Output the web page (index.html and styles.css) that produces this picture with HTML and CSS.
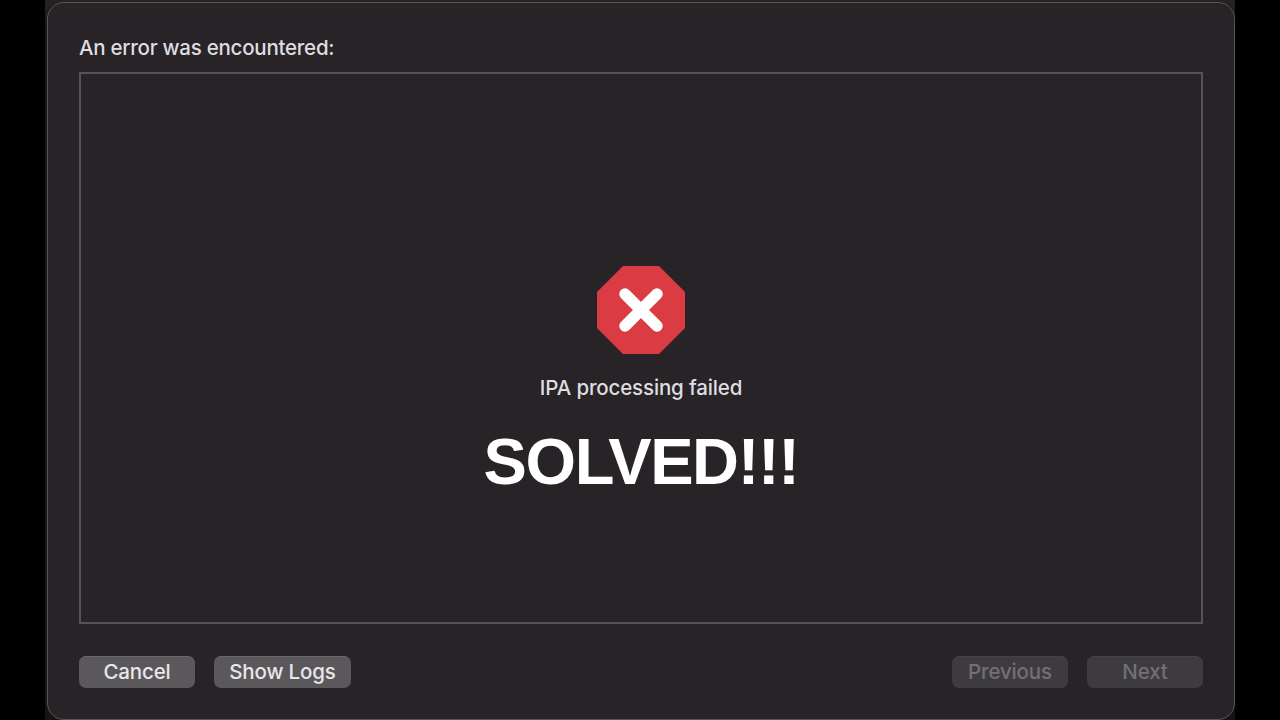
FILE: index.html
```html
<!DOCTYPE html>
<html lang="en">

<head>
    <meta charset="UTF-8">
    <meta name="viewport" content="width=device-width, initial-scale=1.0">
    <title>IPA processing failed</title>
    <link rel="stylesheet" href="styles.css">
</head>

<body>
    <div class="backdrop">
        <div class="dialog">
            <h1 class="heading">An error was encountered:</h1>

            <!-- Error message -->
            <div class="message-box">
                <svg class="error-icon" viewBox="0 0 88 88">
                    <path fill="#db3b42" d="M26 0H62L88 26V62L62 88H26L0 62V26Z" />
                    <path stroke="#fff" stroke-width="11.5" stroke-linecap="round" d="M28 28L60 60M60 28L28 60" />
                </svg>
                <p class="message">IPA processing failed</p>
                <p class="solved">SOLVED!!!</p>
            </div>

            <!-- Buttons -->
            <div class="buttons">
                <button class="cancel">Cancel</button>
                <button class="logs">Show Logs</button>
                <button class="previous" disabled>Previous</button>
                <button class="next" disabled>Next</button>
            </div>
        </div>
    </div>
</body>

</html>
```
FILE: styles.css
```css
* {
    margin: 0;
    padding: 0;
    box-sizing: border-box;
}

body {
    height: 720px;
    overflow: hidden;
    background-color: #000;
    font-family: Inter, "Liberation Sans", sans-serif;
    font-size: 20.5px;
    font-weight: 400;
    color: #dfdde0;
}

/* Strip of desktop behind the dialog */
.backdrop {
    width: 1190px;
    height: 720px;
    margin-left: 45px;
    padding: 2px 0 0 2px;
    background: linear-gradient(#252422, #151415 30px);
}

.dialog {
    display: flex;
    flex-direction: column;
    height: 718px;
    padding: 30px 31px 31px;
    border: 1px solid #57555a;
    border-radius: 17px;
    background-color: #272327;
}

.heading {
    height: 39px;
    padding-top: 1px;
    font-size: 20.5px;
    font-weight: 450;
    line-height: 28px;
    letter-spacing: -0.25px;
}

/* Message area */
.message-box {
    display: flex;
    flex-direction: column;
    align-items: center;
    height: 552px;
    padding-top: 192px;
    border: 2px solid #565358;
}

.error-icon {
    width: 88px;
    height: 88px;
}

.message {
    margin-top: 20px;
    font-weight: 450;
    line-height: 28px;
    letter-spacing: -0.15px;
}

.solved {
    margin-top: 23px;
    font-family: "Liberation Sans", sans-serif;
    font-size: 65px;
    font-weight: bold;
    line-height: 74px;
    letter-spacing: -1.4px;
    color: #fff;
}

/* Buttons */
.buttons {
    display: flex;
    gap: 19px;
    margin-top: 32px;
}

button {
    width: 116px;
    height: 32px;
    padding-bottom: 2px;
    border: none;
    border-top: 1px solid #6a686b;
    border-radius: 7px;
    background-color: #5a585b;
    font-family: inherit;
    font-size: 20.5px;
    font-weight: 450;
    line-height: 29px;
    letter-spacing: -0.15px;
    color: #e8e6e9;
}

button:disabled {
    border-top-color: #454246;
    background-color: #3e3b3f;
    color: #727074;
}

.logs {
    width: 137px;
}

.previous {
    margin-left: auto;
}
```
